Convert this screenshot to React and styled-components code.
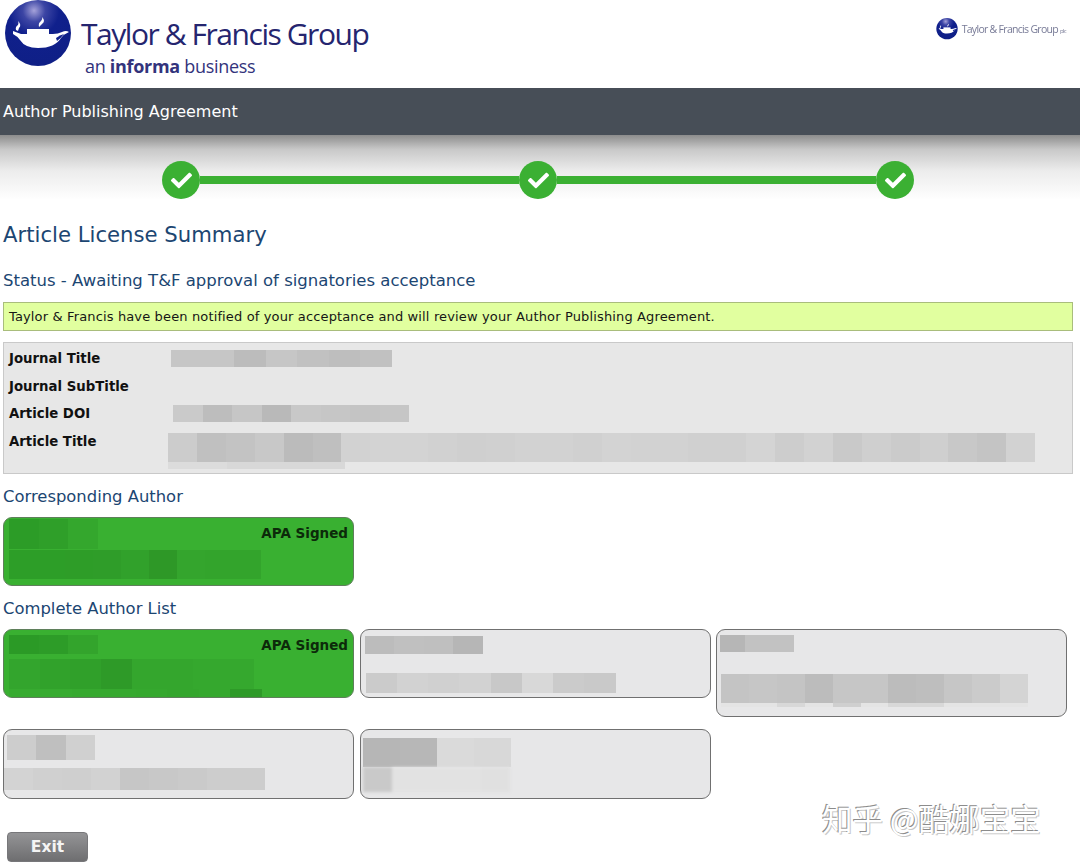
import styled, { createGlobalStyle } from "styled-components";
import { FaCheck } from "react-icons/fa";

const GlobalStyle = createGlobalStyle`
  html, body {
    margin: 0;
    padding: 0;
    background: #fff;
  }
  body {
    font-family: "DejaVu Sans", Verdana, sans-serif;
    color: #000;
  }
`;

const journalRows = [
  { label: "Journal Title", left: 3, width: 221, cells: ["#c6c6c6", "#c6c6c6", "#bcbcbc", "#c6c6c6", "#c1c1c1", "#bebebe", "#c1c1c1"] },
  { label: "Journal SubTitle" },
  { label: "Article DOI", left: 5, width: 236, cells: ["#cacaca", "#bdbdbd", "#c6c6c6", "#b9b9b9", "#c8c8c8", "#c6c6c6", "#c4c4c4", "#c6c6c6"] },
];

const titleCells = ["#cccccc", "#c0c0c0", "#c3c3c3", "#c8c8c8", "#bbbbbb", "#bfbfbf", "#d2d2d2", "#d3d3d3", "#d3d3d3", "#d1d1d1", "#cfcfcf", "#d0d0d0", "#d2d2d2", "#d2d2d2", "#d0d0d0", "#d3d3d3", "#d2d2d2", "#d2d2d2", "#d0d0d0", "#d0d0d0", "#d4d4d4", "#cdcdcd", "#d2d2d2", "#c9c9c9", "#cfcfcf", "#cbcbcb", "#cfcfcf", "#c8c8c8", "#c4c4c4", "#d2d2d2"];

function LampLogo({ size }) {
  return (
    <svg width={size} height={size} viewBox="0 0 68 68">
      <defs>
        <radialGradient id={`ball${size}`} cx="0.44" cy="0.16" r="0.85">
          <stop offset="0" stop-color="#a5a2da" />
          <stop offset="0.2" stop-color="#3c45a4" />
          <stop offset="0.45" stop-color="#10208c" />
          <stop offset="1" stop-color="#0f1f86" />
        </radialGradient>
      </defs>
      <circle cx="34" cy="33" r="33" fill={`url(#ball${size})`} />
      <path d="M9 31 L17 34 H49 Q54 34 58 32 Q62 30 65 32 Q60 34 57 38 Q51 48 34 48 Q21 48 16 40 Q13 36 9 34 Z" fill="#fff" />
      <path d="M23 29 H45 V34 H23 Z" fill="#fff" />
      <path d="M12 30 Q11 27 14 25 Q15 23 14 21 Q18 25 15 28 L14 31 Z" fill="#fff" />
      <path d="M35 27 Q34 23 37 21 Q39 19 38 17 Q42 21 38 24 Z" fill="#fff" />
      <path d="M52 38 Q56 35 60 34 Q57 38 53 41 Z" fill="#10208c" />
    </svg>
  );
}

function Smear({ cells, width, height, left = 0, top = 0, soft }) {
  return (
    <SmearRow $width={width} $height={height} $left={left} $top={top} $soft={soft}>
      {cells.map((c, i) => (
        <SmearCell key={i} $color={c} />
      ))}
    </SmearRow>
  );
}

export default function App() {
  return (
    <Page>
      <GlobalStyle />
      <Header>
        <Brand>
          <LampLogo size={68} />
          <BrandText>
            <BrandName>Taylor &amp; Francis Group</BrandName>
            <BrandSub>
              an <b>informa</b> business
            </BrandSub>
          </BrandText>
        </Brand>
        <SmallBrand>
          <LampLogo size={22} />
          <SmallName>
            Taylor &amp; Francis Group <small>plc</small>
          </SmallName>
        </SmallBrand>
      </Header>

      <TitleBar>Author Publishing Agreement</TitleBar>

      <Stepper>
        <StepDot>
          <FaCheck size={21} />
        </StepDot>
        <StepLine />
        <StepDot>
          <FaCheck size={21} />
        </StepDot>
        <StepLine />
        <StepDot>
          <FaCheck size={21} />
        </StepDot>
      </Stepper>

      <Content>
        <PageTitle>Article License Summary</PageTitle>
        <StatusTitle>Status - Awaiting T&amp;F approval of signatories acceptance</StatusTitle>
        <Notice>Taylor &amp; Francis have been notified of your acceptance and will review your Author Publishing Agreement.</Notice>

        <JournalPanel>
          {journalRows.map((row) => (
            <JournalRow key={row.label}>
              <JournalLabel>{row.label}</JournalLabel>
              {row.cells && <Smear cells={row.cells} width={row.width} height={17} left={row.left} />}
            </JournalRow>
          ))}
          <JournalRow>
            <JournalLabel>Article Title</JournalLabel>
            <div>
              <Smear cells={titleCells} width={867} height={29} />
              <Smear cells={["#dcdcdc", "#d8d8d8", "#d8d8d8"]} width={177} height={7} />
            </div>
          </JournalRow>
        </JournalPanel>

        <SectionTitle>Corresponding Author</SectionTitle>
        <Cards>
          <AuthorCard $signed $height={69}>
            <CardTop>
              <Smear cells={["#2c9c27", "#2f9f29", "#34a72d"]} width={89} height={30} left={5} top={1} />
              <SignedTag>APA Signed</SignedTag>
            </CardTop>
            <Smear cells={["#2d9e28", "#2d9e28", "#2e9d28", "#2f9d29", "#31a12b", "#2e9827", "#34a52d", "#33a42c", "#33a42c"]} width={252} height={29} left={5} />
          </AuthorCard>
        </Cards>

        <SectionTitle>Complete Author List</SectionTitle>
        <Cards>
          <AuthorCard $signed $height={69}>
            <CardTop>
              <Smear cells={["#2b9a26", "#2d9c28", "#33a42c"]} width={89} height={19} left={5} top={5} />
              <SignedTag>APA Signed</SignedTag>
            </CardTop>
            <Smear cells={["#33a52d", "#31a22b", "#30a02a", "#2e9a28", "#34a62d", "#34a62d", "#35a82e", "#35a82e"]} width={245} height={30} left={5} top={-3} />
            <Smear cells={["#37ab30", "#37ab30", "#36a92f", "#36a92f", "#35a82e", "#34a62d", "#35a82e", "#2e9a28"]} width={253} height={9} left={5} />
          </AuthorCard>

          <AuthorCard $height={69}>
            <Smear cells={["#bcbcbc", "#c0c0c0", "#bfbfbf", "#b6b6b6"]} width={118} height={18} left={4} top={6} />
            <Smear cells={["#cbcbcb", "#d2d2d2", "#d0d0d0", "#d2d2d2", "#c8c8c8", "#d8d8d8", "#cbcbcb", "#c9c9c9"]} width={250} height={20} left={5} top={19} />
          </AuthorCard>

          <AuthorCard $height={88}>
            <Smear cells={["#b6b6b6", "#c2c2c2", "#c2c2c2"]} width={74} height={17} left={3} top={5} />
            <Smear cells={["#c4c4c4", "#c6c6c6", "#c4c4c4", "#bcbcbc", "#c6c6c6", "#c6c6c6", "#bcbcbc", "#bebebe", "#c6c6c6", "#cbcbcb", "#d4d4d4"]} width={307} height={29} left={4} top={22} />
            <Smear cells={["#e4e4e4", "#e4e4e4", "#d8d8d8", "#e4e4e4", "#cfcfcf", "#e4e4e4", "#d8d8d8", "#d8d8d8", "#e4e4e4", "#e4e4e4", "#e4e4e4"]} width={307} height={4} left={4} />
          </AuthorCard>

          <AuthorCard $height={70}>
            <Smear cells={["#cdcdcd", "#bfbfbf", "#d0d0d0"]} width={88} height={25} left={3} top={5} />
            <Smear cells={["#d3d3d3", "#d0d0d0", "#cfcfcf", "#d2d2d2", "#c6c6c6", "#c8c8c8", "#cacaca", "#cdcdcd", "#cdcdcd"]} width={261} height={22} left={0} top={8} />
          </AuthorCard>

          <AuthorCard $height={70}>
            <Smear cells={["#b6b6b6", "#b7b7b7", "#dadada", "#d8d8d8"]} width={148} height={29} left={2} top={8} />
            <Smear cells={["#c9c9c9", "#e2e2e2", "#e2e2e2", "#e2e2e2", "#e0e0e0"]} width={148} height={25} left={2} soft />
          </AuthorCard>
        </Cards>

        <ExitButton>Exit</ExitButton>
      </Content>

      <Watermark>知乎 @酷娜宝宝</Watermark>
    </Page>
  );
}

const Page = styled.div`
  position: relative;
  width: 1080px;
  height: 864px;
  overflow: hidden;
  background: #fff;
`;

const Header = styled.header`
  height: 88px;
  display: flex;
  justify-content: space-between;
  align-items: flex-start;
  padding: 0 14px 0 4px;
  box-sizing: border-box;
`;

const Brand = styled.div`
  display: flex;
  align-items: flex-start;
  gap: 9px;
`;

const BrandText = styled.div`
  display: flex;
  flex-direction: column;
  color: #25256f;
  font-family: "Open Sans", sans-serif;
`;

const BrandName = styled.div`
  font-size: 30px;
  line-height: 40px;
  margin-top: 14px;
  letter-spacing: -1.45px;
`;

const BrandSub = styled.div`
  font-size: 18px;
  line-height: 24px;
  margin-left: 4px;
  letter-spacing: -0.3px;
  color: #33337c;
`;

const SmallBrand = styled.div`
  display: flex;
  align-items: center;
  gap: 4px;
  margin-top: 18px;
`;

const SmallName = styled.div`
  font-family: "Open Sans", sans-serif;
  font-size: 10.5px;
  letter-spacing: -0.7px;
  color: #777a96;
  filter: blur(0.4px);

  small {
    font-size: 6px;
  }
`;

const TitleBar = styled.div`
  height: 47px;
  line-height: 47px;
  padding-left: 3px;
  background: #474e57;
  color: #fff;
  font-size: 16px;
`;

const Stepper = styled.div`
  height: 65px;
  box-sizing: border-box;
  padding: 26px 0 0 162px;
  display: flex;
  align-items: flex-start;
  background: linear-gradient(180deg, #8c8c8c 0%, #c8c8c8 22%, #ececec 55%, #fff 100%);
`;

const StepDot = styled.div`
  width: 38px;
  height: 38px;
  flex: none;
  border-radius: 50%;
  background: #3bb033;
  color: #fff;
  display: flex;
  align-items: center;
  justify-content: center;
`;

const StepLine = styled.div`
  width: 319px;
  height: 8px;
  margin-top: 15px;
  background: #3bb033;
`;

const Content = styled.main`
  padding: 0 7px 0 3px;
`;

const PageTitle = styled.h1`
  margin: 20px 0 0;
  font-size: 21.2px;
  font-weight: 400;
  line-height: 30px;
  color: #1c4672;
`;

const StatusTitle = styled.h2`
  margin: 20px 0 0;
  font-size: 16.5px;
  font-weight: 400;
  line-height: 22px;
  color: #1c4672;
`;

const SectionTitle = styled.h3`
  margin: 12px 0 9px;
  font-size: 16.4px;
  font-weight: 400;
  line-height: 22px;
  color: #1c4672;
`;

const Notice = styled.div`
  margin-top: 10px;
  height: 29px;
  box-sizing: border-box;
  padding-left: 5px;
  border: 1px solid #a9bd7c;
  background: #e1ff9f;
  font-size: 13px;
  letter-spacing: 0.14px;
  line-height: 27px;
  color: #161616;
`;

const JournalPanel = styled.section`
  margin-top: 11px;
  height: 132px;
  box-sizing: border-box;
  padding: 7px 0 0 5px;
  border: 1px solid #c9c9c9;
  background: #e7e7e7;
`;

const JournalRow = styled.div`
  display: grid;
  grid-template-columns: 159px 1fr;
  min-height: 27.6px;
`;

const JournalLabel = styled.div`
  font-size: 13.3px;
  font-weight: 700;
  line-height: 17px;
  color: #111;
`;

const SmearRow = styled.div`
  display: flex;
  width: ${(p) => p.$width}px;
  height: ${(p) => p.$height}px;
  margin-left: ${(p) => p.$left}px;
  margin-top: ${(p) => p.$top}px;
  filter: blur(${(p) => (p.$soft ? 1.5 : 0.5)}px);
`;

const SmearCell = styled.span`
  flex: 1;
  background: ${(p) => p.$color};
`;

const Cards = styled.div`
  display: flex;
  flex-wrap: wrap;
  align-items: flex-start;
  gap: 12px 5.5px;
`;

const AuthorCard = styled.div`
  width: 351px;
  height: ${(p) => p.$height}px;
  box-sizing: border-box;
  overflow: hidden;
  border: 1.5px solid ${(p) => (p.$signed ? "#5f7f5b" : "#707070")};
  border-radius: 9px;
  background: ${(p) => (p.$signed ? "#39b031" : "#e7e7e8")};
`;

const CardTop = styled.div`
  display: flex;
  justify-content: space-between;
  align-items: flex-start;
  height: 32px;
`;

const SignedTag = styled.span`
  margin: 7px 5px 0 0;
  font-size: 13.5px;
  font-weight: 700;
  line-height: 17px;
  color: #0c2a0a;
`;

const ExitButton = styled.button`
  display: block;
  margin: 33px 0 0 4px;
  width: 81px;
  height: 30px;
  box-sizing: border-box;
  padding: 0;
  border: 1px solid #77777a;
  border-radius: 4px;
  background: linear-gradient(180deg, #949496 0%, #6e6e70 100%);
  color: #f4f4f4;
  font-family: "DejaVu Sans", Verdana, sans-serif;
  font-size: 15.5px;
  font-weight: 700;
`;

const Watermark = styled.div`
  position: absolute;
  left: 822px;
  top: 798px;
  width: 240px;
  font-family: "Noto Sans CJK SC", sans-serif;
  font-size: 30.5px;
  line-height: 40px;
  white-space: nowrap;
  color: #fff;
  text-shadow: -1px -1px 0 #8c8c8c, 1px 1px 0 #c8c8c8;
`;
